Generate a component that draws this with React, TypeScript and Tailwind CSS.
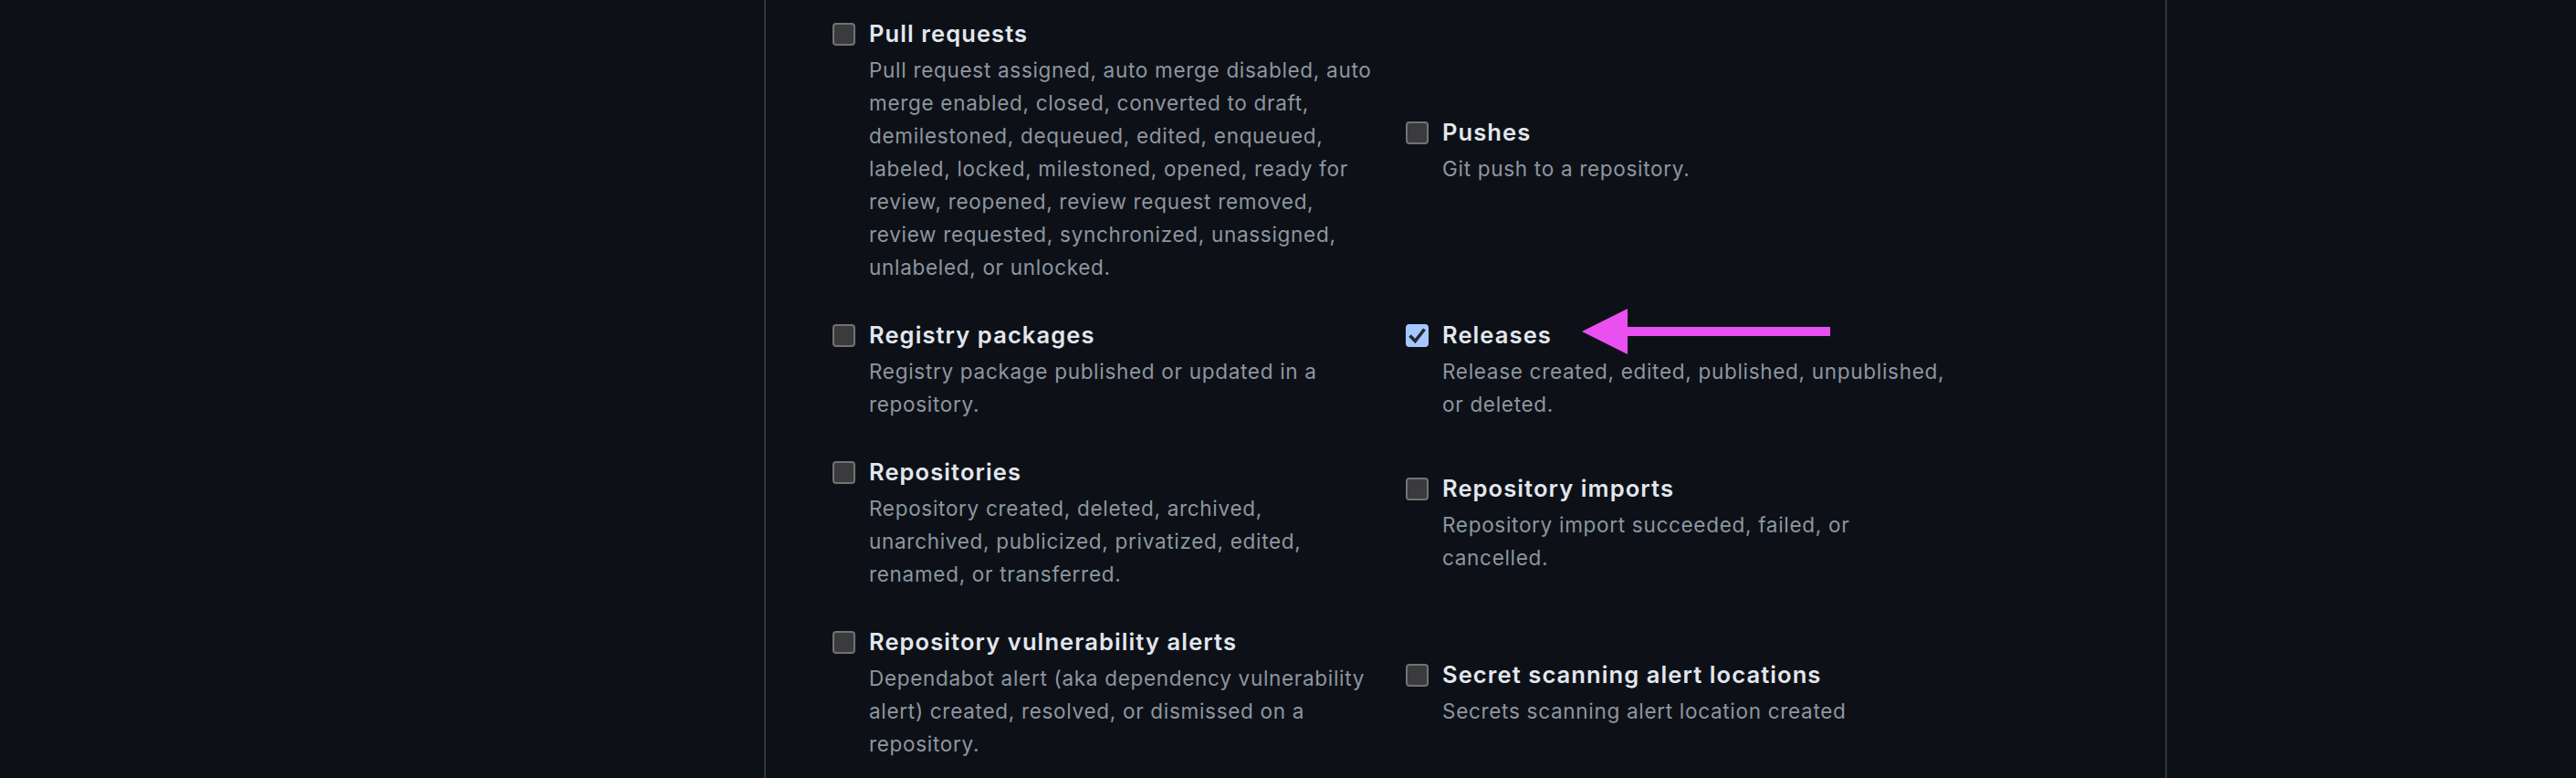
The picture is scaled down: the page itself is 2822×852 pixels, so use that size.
import React from "react";

type Item = { title: string; lines: string[]; checked?: boolean };

const rows: [Item, Item][] = [
  [
    {
      title: "Pull requests",
      lines: [
        "Pull request assigned, auto merge disabled, auto",
        "merge enabled, closed, converted to draft,",
        "demilestoned, dequeued, edited, enqueued,",
        "labeled, locked, milestoned, opened, ready for",
        "review, reopened, review request removed,",
        "review requested, synchronized, unassigned,",
        "unlabeled, or unlocked.",
      ],
    },
    { title: "Pushes", lines: ["Git push to a repository."] },
  ],
  [
    {
      title: "Registry packages",
      lines: ["Registry package published or updated in a", "repository."],
    },
    {
      title: "Releases",
      checked: true,
      lines: ["Release created, edited, published, unpublished,", "or deleted."],
    },
  ],
  [
    {
      title: "Repositories",
      lines: [
        "Repository created, deleted, archived,",
        "unarchived, publicized, privatized, edited,",
        "renamed, or transferred.",
      ],
    },
    {
      title: "Repository imports",
      lines: ["Repository import succeeded, failed, or", "cancelled."],
    },
  ],
  [
    {
      title: "Repository vulnerability alerts",
      lines: [
        "Dependabot alert (aka dependency vulnerability",
        "alert) created, resolved, or dismissed on a",
        "repository.",
      ],
    },
    {
      title: "Secret scanning alert locations",
      lines: ["Secrets scanning alert location created"],
    },
  ],
];

function Checkbox({ checked }: { checked?: boolean }) {
  if (checked) {
    return (
      <div className="w-[25px] h-[25px] rounded-[4px] bg-[#a5c9ff] flex items-center justify-center">
        <svg width="25" height="25" viewBox="0 0 25 25">
          <path
            d="M4.5 12.5 L10.3 18.6 L20.5 5.5"
            fill="none"
            stroke="#262a30"
            strokeWidth="3.6"
            strokeLinecap="butt"
            strokeLinejoin="miter"
          />
        </svg>
      </div>
    );
  }
  return (
    <div className="w-[25px] h-[25px] rounded-[4px] bg-[#3b3b3d] border-2 border-[#727272]" />
  );
}

function EventItem({ item }: { item: Item }) {
  return (
    <div className="flex items-start gap-[15px]">
      <div className="h-[36px] flex items-center">
        <Checkbox checked={item.checked} />
      </div>
      <div className="flex flex-col">
        <div className="h-[36px] leading-[36px] text-[25.5px] font-semibold tracking-[1.1px] text-[#e2e7ee] whitespace-nowrap">
          {item.title}
        </div>
        <div className="mt-[4px] text-[22.5px] leading-[36px] text-[#8d96a0] tracking-[0.7px]">
          {item.lines.map((l, i) => (
            <div key={i} className="whitespace-nowrap">
              {l}
            </div>
          ))}
        </div>
      </div>
    </div>
  );
}

export default function App() {
  return (
    <div
      className="relative w-[2822px] h-[852px] bg-[#0d1117] overflow-hidden"
      style={{ fontFamily: "Inter, 'Liberation Sans', sans-serif" }}
    >
      <div className="ml-[837px] w-[1537px] h-full border-x-2 border-[#30363d] pl-[73px] pt-[19px]">
        <div className="grid grid-cols-[628px_628px] items-center gap-y-[38px]">
          {rows.map((r, i) => (
            <React.Fragment key={i}>
              <EventItem item={r[0]} />
              <EventItem item={r[1]} />
            </React.Fragment>
          ))}
        </div>
      </div>
      <svg
        className="absolute left-[1733px] top-[338px]"
        width="272"
        height="50"
        viewBox="0 0 272 50"
      >
        <polygon
          points="0,25 50,0 50,20 272,20 272,30 50,30 50,50"
          fill="#ea4ff0"
        />
      </svg>
    </div>
  );
}
